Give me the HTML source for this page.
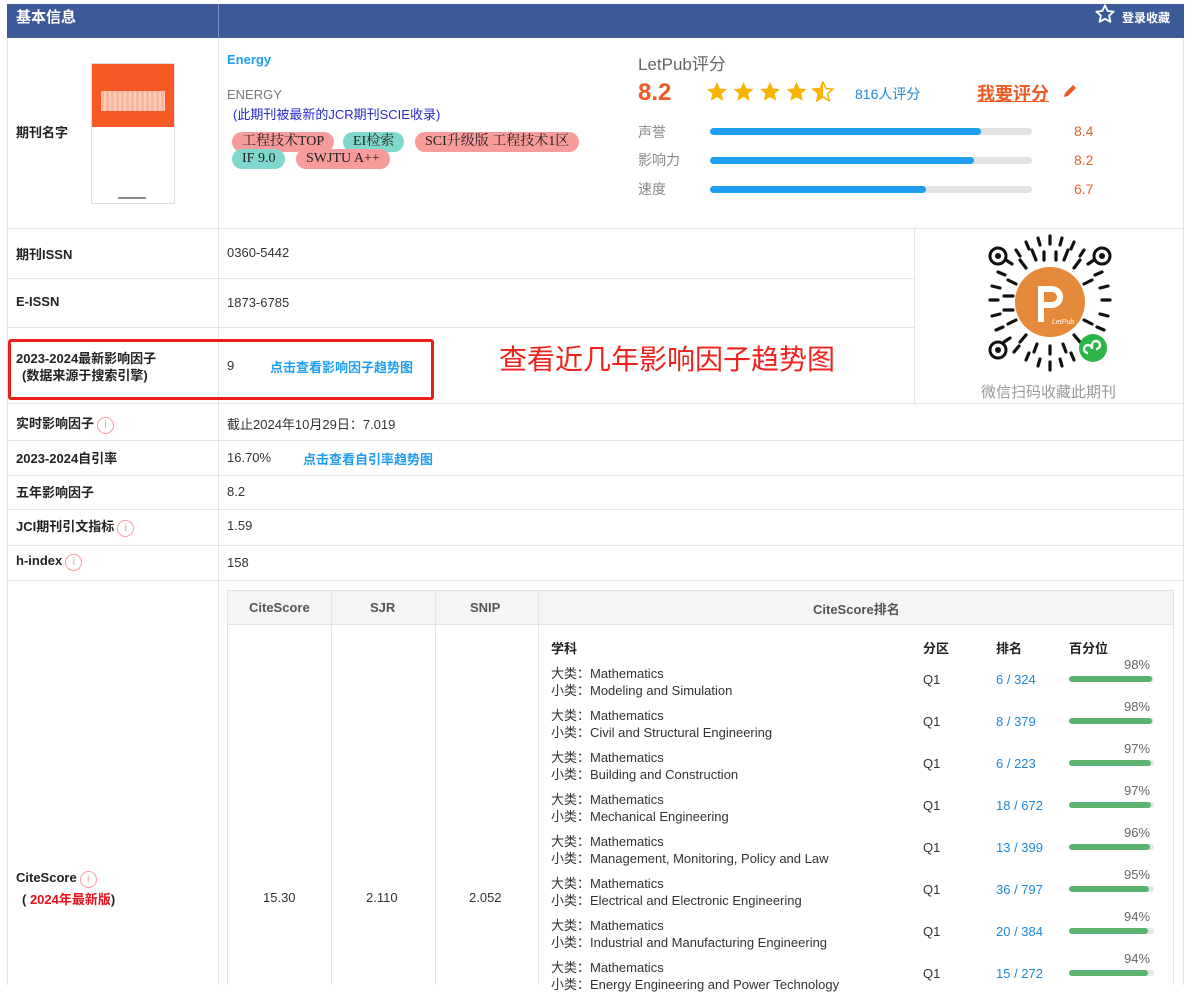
<!DOCTYPE html>
<html><head><meta charset="utf-8">
<style>
*{margin:0;padding:0;box-sizing:border-box}
body{width:1192px;height:985px;overflow:hidden;background:#fff;position:relative;font-family:"Liberation Sans","Noto Sans CJK SC",sans-serif;font-size:13px;color:#333}
.a{position:absolute;white-space:nowrap}
.hl{position:absolute;height:1px;background:#e4e4e4}
.vl{position:absolute;width:1px;background:#e4e4e4}
.lab{font-weight:bold;color:#222;font-size:13px}
.info{display:inline-block;width:17px;height:17px;border:1.5px solid #f4a0a0;border-radius:50%;color:#f4a0a0;font-size:11px;text-align:center;line-height:14px;vertical-align:0px;margin-left:3px;font-weight:normal}
.tag{position:absolute;height:20px;border-radius:10px;font-family:"Liberation Serif","Noto Serif CJK SC",serif;font-size:14px;line-height:20px;padding:0 10px;color:#222}
.pk{background:#f79b9b}.gr{background:#80d8cc}
.bar{position:absolute;height:7px;border-radius:4px;background:#e2e2e2}
.bar i{display:block;height:7px;border-radius:4px;background:#1e9ef0}
.gb{position:absolute;left:1069px;width:85px;height:6px;border-radius:3px;background:#e5e5e5}
.gb i{display:block;height:6px;border-radius:3px;background:#5cb36d}
.blue{color:#1e88d6}
</style></head><body>
<div class="a" style="left:7px;top:4px;width:1177px;height:34px;background:#3c5a98"></div>
<div class="a" style="left:218px;top:4px;width:1px;height:34px;background:#7f93bd"></div>
<div class="a" style="left:16px;top:6px;color:#fff;font-weight:bold;font-size:15px">基本信息</div>
<svg class="a" style="left:1094px;top:3px" width="22" height="22" viewBox="0 0 24 24"><path d="M12 2.5l2.9 6.2 6.6.7-5 4.5 1.4 6.6L12 17.2l-5.9 3.3 1.4-6.6-5-4.5 6.6-.7z" fill="none" stroke="#fff" stroke-width="2" stroke-linejoin="round"/></svg>
<div class="a" style="left:1122px;top:9px;color:#fff;font-weight:bold;font-size:12px">登录收藏</div>

<div class="vl" style="left:7px;top:38px;height:947px"></div>
<div class="vl" style="left:1183px;top:38px;height:947px"></div>
<div class="vl" style="left:218px;top:38px;height:947px"></div>
<div class="hl" style="left:7px;top:228px;width:1177px"></div>
<div class="hl" style="left:7px;top:278px;width:907px"></div>
<div class="hl" style="left:7px;top:327px;width:907px"></div>
<div class="hl" style="left:7px;top:403px;width:1177px"></div>
<div class="hl" style="left:7px;top:440px;width:1177px"></div>
<div class="hl" style="left:7px;top:475px;width:1177px"></div>
<div class="hl" style="left:7px;top:509px;width:1177px"></div>
<div class="hl" style="left:7px;top:545px;width:1177px"></div>
<div class="hl" style="left:7px;top:580px;width:1177px"></div>
<div class="vl" style="left:914px;top:228px;height:175px"></div>

<div class="a lab" style="left:16px;top:122px">期刊名字</div>
<div class="a" style="left:91px;top:63px;width:84px;height:141px;border:1px solid #ddd;background:#fff"></div>
<div class="a" style="left:92px;top:64px;width:82px;height:63px;background:#f55a24"></div>
<div class="a" style="left:101px;top:91px;width:64px;height:20px;background:repeating-linear-gradient(90deg,#f9c7b3 0 3px,#fbe2d6 3px 5px);opacity:.85"></div>
<div class="a" style="left:118px;top:197px;width:28px;height:2px;background:#888"></div>
<div class="a" style="left:227px;top:52px;color:#1e9ef0;font-weight:bold;font-size:13px">Energy</div>
<div class="a" style="left:227px;top:87px;color:#777;font-size:13px">ENERGY</div>
<div class="a" style="left:233px;top:104px;color:#2a2ad0;font-size:13px">(此期刊被最新的JCR期刊SCIE收录)</div>
<div class="tag pk" style="left:232px;top:132px">工程技术TOP</div>
<div class="tag gr" style="left:343px;top:132px">EI检索</div>
<div class="tag pk" style="left:415px;top:132px">SCI升级版 工程技术1区</div>
<div class="tag gr" style="left:232px;top:149px">IF 9.0</div>
<div class="tag pk" style="left:296px;top:149px">SWJTU A++</div>

<div class="a" style="left:638px;top:50px;color:#666;font-size:17px">LetPub评分</div>
<div class="a" style="left:638px;top:79px;color:#f05a22;font-size:24px;font-weight:bold">8.2</div>
<svg class="a" style="left:706px;top:81px" width="130" height="22" viewBox="0 0 130 22">
<g fill="#f9b400"><path id="s" d="M11 1l2.9 6.5 7 .6-5.3 4.7 1.6 6.9L11 16.1l-6.2 3.6 1.6-6.9L1.1 8.1l7-.6z"/><use href="#s" x="26.5"/><use href="#s" x="53"/><use href="#s" x="79.5"/></g>
<g transform="translate(106,0)"><path d="M11 1l2.9 6.5 7 .6-5.3 4.7 1.6 6.9L11 16.1l-6.2 3.6 1.6-6.9L1.1 8.1l7-.6z" fill="none" stroke="#f9b400" stroke-width="1.6"/><path d="M11 1L8.1 7.5l-7 .6 5.3 4.7-1.6 6.9L11 16.1z" fill="#f9b400"/></g></svg>
<div class="a" style="left:855px;top:84px;color:#1e88d6;font-size:14px">816人评分</div>
<div class="a" style="left:977px;top:80px;color:#f05a22;font-size:18px;font-weight:bold;text-decoration:underline">我要评分</div>
<svg class="a" style="left:1061px;top:82px" width="18" height="18" viewBox="0 0 18 18"><path d="M3 15l1-4 8-8 3 3-8 8z" fill="#f05a22"/></svg>
<div class="a" style="left:638px;top:122px;color:#888;font-size:14px">声誉</div>
<div class="a" style="left:638px;top:150px;color:#888;font-size:14px">影响力</div>
<div class="a" style="left:638px;top:179px;color:#888;font-size:14px">速度</div>
<div class="bar" style="left:710px;top:128px;width:322px"><i style="width:271px"></i></div>
<div class="bar" style="left:710px;top:157px;width:322px"><i style="width:264px"></i></div>
<div class="bar" style="left:710px;top:186px;width:322px"><i style="width:216px"></i></div>
<div class="a" style="left:1074px;top:123px;color:#e0632f;font-size:14px">8.4</div>
<div class="a" style="left:1074px;top:152px;color:#e0632f;font-size:14px">8.2</div>
<div class="a" style="left:1074px;top:181px;color:#e0632f;font-size:14px">6.7</div>

<div class="a lab" style="left:16px;top:244px">期刊ISSN</div>
<div class="a" style="left:227px;top:245px">0360-5442</div>
<div class="a lab" style="left:16px;top:294px">E-ISSN</div>
<div class="a" style="left:227px;top:295px">1873-6785</div>
<div class="a lab" style="left:16px;top:348px">2023-2024最新影响因子</div>
<div class="a lab" style="left:22px;top:365px">(数据来源于搜索引擎)</div>
<div class="a" style="left:227px;top:358px">9</div>
<div class="a" style="left:270px;top:357px;color:#1e9ef0;font-weight:bold">点击查看影响因子趋势图</div>
<div class="a" style="left:8px;top:339px;width:426px;height:61px;border:3px solid #e8201c;border-radius:3px"></div>
<div class="a" style="left:499px;top:338px;color:#f0201c;font-size:28px">查看近几年影响因子趋势图</div>

<svg class="a" style="left:976px;top:230px" width="148" height="148" viewBox="0 0 148 148">
<g stroke="#111" stroke-width="3.2" stroke-linecap="round">
<path d="M74 6v8M62 8l2 7M86 8l-2 7M50 12l3 7M98 12l-3 7M40 20l4 6M108 20l-4 6M30 30l6 4M118 30l-6 4M22 42l7 3M126 42l-7 3M16 56l8 2M132 56l-8 2M14 70h8M134 70h-8M16 86l8-2M132 86l-8-2M20 100l7-3M128 100l-7-3M28 112l6-4M120 112l-6-4M38 122l5-6M110 122l-5-6M50 130l3-7M98 130l-3-7M62 136l2-7M86 136l-2-7M74 140v-8"/>
<path d="M56 20l4 10M92 20l-4 10M44 30l6 8M104 30l-6 8M32 50l8 4M116 50l-8 4M28 66h9M28 80h9M32 94l8-4M116 94l-8-4M44 112l6-7M104 112l-6-7M58 122l3-8M90 122l-3-8M68 22v8M80 22v8M74 124v-8"/>
</g>
<g fill="none" stroke="#111" stroke-width="3"><circle cx="22" cy="26" r="8"/><circle cx="126" cy="26" r="8"/><circle cx="22" cy="120" r="8"/></g>
<g fill="#111"><circle cx="22" cy="26" r="3"/><circle cx="126" cy="26" r="3"/><circle cx="22" cy="120" r="3"/></g>
<circle cx="74" cy="72" r="35" fill="#e58a3a"/>
<path d="M62 92V56h14a11 11 0 0 1 0 22H68v14z M68 62v10h8a5 5 0 0 0 0-10z" fill="#fff" fill-rule="evenodd"/>
<text x="76" y="94" font-size="7" fill="#fff" font-style="italic" font-family="Liberation Sans">LetPub</text>
<circle cx="117" cy="118" r="14" fill="#2cb64a"/>
<path d="M112 123a4 4 0 1 1 4-4v-4a4 4 0 1 1 4 4" fill="none" stroke="#fff" stroke-width="2.4"/>
</svg>
<div class="a" style="left:981px;top:381px;color:#999;font-size:15px">微信扫码收藏此期刊</div>

<div class="a lab" style="left:16px;top:413px">实时影响因子<span class="info">i</span></div>
<div class="a" style="left:227px;top:414px">截止2024年10月29日：7.019</div>
<div class="a lab" style="left:16px;top:448px">2023-2024自引率</div>
<div class="a" style="left:227px;top:450px">16.70%</div>
<div class="a" style="left:303px;top:449px;color:#1e9ef0;font-weight:bold">点击查看自引率趋势图</div>
<div class="a lab" style="left:16px;top:482px">五年影响因子</div>
<div class="a" style="left:227px;top:484px">8.2</div>
<div class="a lab" style="left:16px;top:516px">JCI期刊引文指标<span class="info">i</span></div>
<div class="a" style="left:227px;top:518px">1.59</div>
<div class="a lab" style="left:16px;top:553px">h-index<span class="info">i</span></div>
<div class="a" style="left:227px;top:555px">158</div>

<div class="a lab" style="left:16px;top:870px">CiteScore<span class="info">i</span></div>
<div class="a lab" style="left:22px;top:889px">( <span style="color:#e8101a">2024年最新版</span>)</div>

<div class="a" style="left:227px;top:590px;width:947px;height:35px;background:#f5f5f5;border:1px solid #e4e4e4"></div>
<div class="vl" style="left:227px;top:590px;height:395px"></div>
<div class="vl" style="left:1173px;top:590px;height:395px"></div>
<div class="vl" style="left:331px;top:590px;height:395px"></div>
<div class="vl" style="left:435px;top:590px;height:395px"></div>
<div class="vl" style="left:538px;top:590px;height:395px"></div>
<div class="a" style="left:249px;top:600px;font-weight:bold;color:#555">CiteScore</div>
<div class="a" style="left:370px;top:600px;font-weight:bold;color:#555">SJR</div>
<div class="a" style="left:470px;top:600px;font-weight:bold;color:#555">SNIP</div>
<div class="a" style="left:813px;top:599px;font-weight:bold;color:#555">CiteScore排名</div>
<div class="a" style="left:263px;top:890px">15.30</div>
<div class="a" style="left:366px;top:890px">2.110</div>
<div class="a" style="left:469px;top:890px">2.052</div>

<div class="a" style="left:551px;top:638px;font-weight:bold;color:#222">学科</div>
<div class="a" style="left:923px;top:638px;font-weight:bold;color:#222">分区</div>
<div class="a" style="left:996px;top:638px;font-weight:bold;color:#222">排名</div>
<div class="a" style="left:1069px;top:638px;font-weight:bold;color:#222">百分位</div>

<div id="rows"></div>
<script>
var d=[["Modeling and Simulation","6 / 324",98],["Civil and Structural Engineering","8 / 379",98],["Building and Construction","6 / 223",97],["Mechanical Engineering","18 / 672",97],["Management, Monitoring, Policy and Law","13 / 399",96],["Electrical and Electronic Engineering","36 / 797",95],["Industrial and Manufacturing Engineering","20 / 384",94],["Energy Engineering and Power Technology","15 / 272",94]];
var h="";d.forEach(function(r,i){var y=665+42*i;
h+='<div class="a" style="left:551px;top:'+(y-2)+'px">大类：Mathematics</div><div class="a" style="left:551px;top:'+(y+15)+'px">小类：'+r[0]+'</div><div class="a" style="left:923px;top:'+(y+7)+'px">Q1</div><div class="a blue" style="left:996px;top:'+(y+7)+'px">'+r[1]+'</div><div class="a" style="left:1124px;top:'+(y-8)+'px;color:#666">'+r[2]+'%</div><div class="gb" style="top:'+(y+11)+'px"><i style="width:'+(r[2]-0.5)+'%"></i></div>';});
document.getElementById("rows").innerHTML=h;
</script>
</body></html>
